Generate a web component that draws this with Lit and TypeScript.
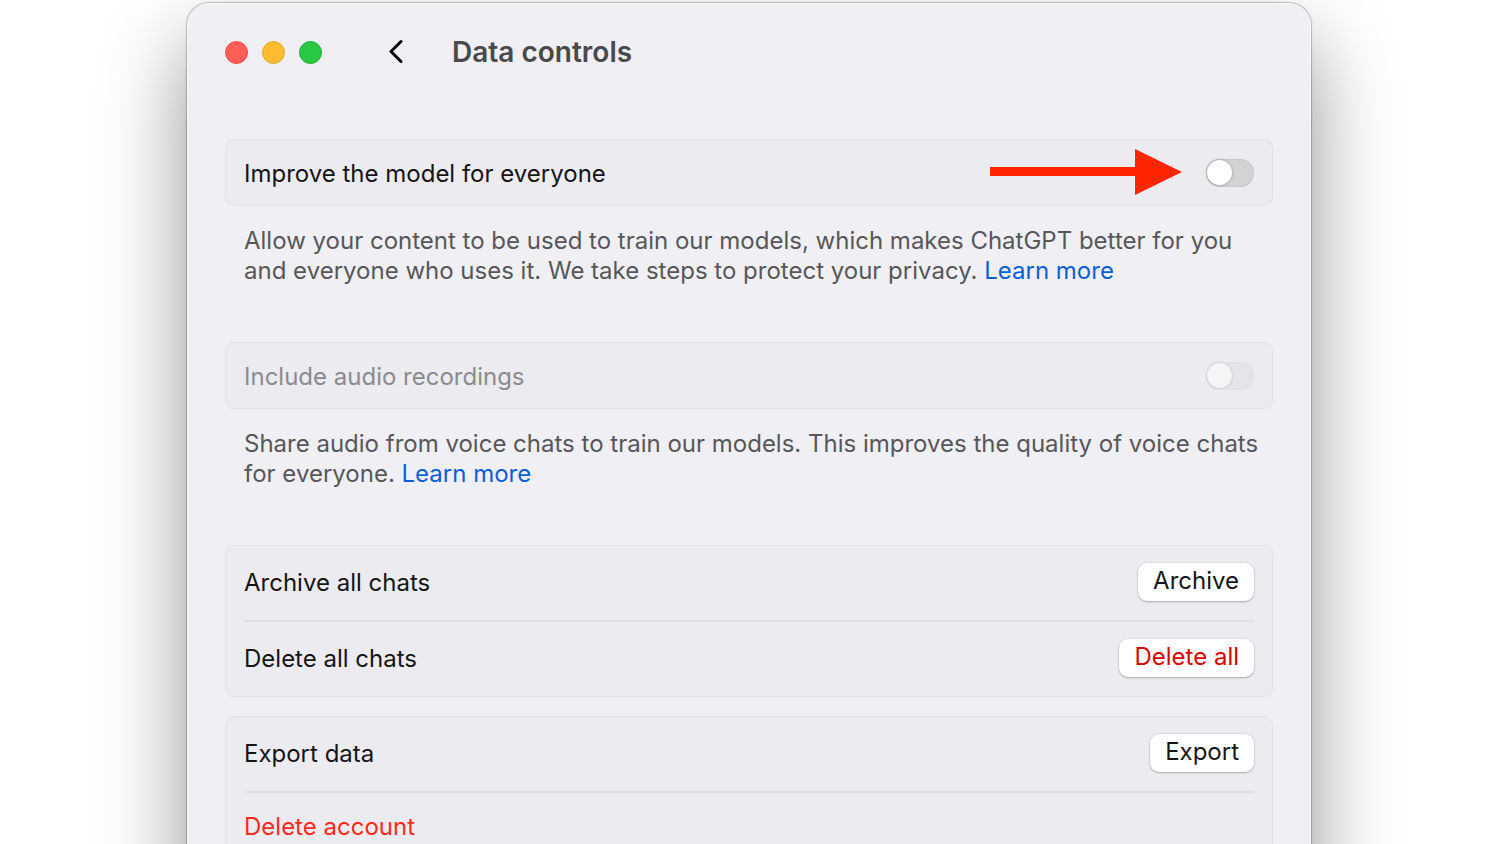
import { LitElement, html, css } from "lit";
import { customElement, property } from "lit/decorators.js";

@customElement("toggle-row")
class ToggleRow extends LitElement {
  @property() label = "";
  @property({ type: Boolean }) disabled = false;

  static styles = css`
    :host {
      display: block;
    }
    .row {
      display: flex;
      align-items: center;
      gap: 24px;
      height: 67px;
      box-sizing: border-box;
      padding: 0 18px;
      border: 1px solid #e2e2e5;
      border-radius: 9px;
      background: #ecebf0;
      color: #151517;
    }
    .label {
      flex: 1;
      padding-top: 2px;
    }
    .switch {
      appearance: none;
      flex: none;
      display: flex;
      align-items: center;
      width: 48px;
      height: 28px;
      box-sizing: border-box;
      margin: 0;
      padding: 1px;
      border-radius: 14px;
      background: #d3d3d6;
      box-shadow: inset 0 0 1px 1px #c8c8cb;
    }
    .switch::before {
      content: "";
      width: 25px;
      height: 25px;
      border-radius: 50%;
      background: #fff;
      box-shadow: 0 0 2px 1px rgba(0, 0, 0, 0.16);
    }
    .switch:checked {
      justify-content: flex-end;
      background: #0a7aff;
    }
    .off {
      color: #8b8b8e;
    }
    .off .switch {
      background: #e4e5e8;
      box-shadow: inset 0 0 1px 1px #e0e1e3;
    }
    .off .switch::before {
      background: #f5f5f7;
      box-shadow: 0 0 2px 1px rgba(0, 0, 0, 0.08);
    }
  `;

  render() {
    return html`
      <div class="row ${this.disabled ? "off" : ""}">
        <label class="label" for="toggle">${this.label}</label>
        <slot></slot>
        <input class="switch" id="toggle" type="checkbox" role="switch" ?disabled=${this.disabled} />
      </div>
    `;
  }
}

@customElement("app-root")
class AppRoot extends LitElement {
  static styles = css`
    :host {
      display: block;
      height: 100vh;
      overflow: hidden;
      background: #fff;
      font: 24px/30px Inter, "Liberation Sans", sans-serif;
    }
    .window {
      min-height: 120vh;
      box-sizing: border-box;
      margin: 3px 189px 0 187px;
      padding: 0 37px;
      border: 1px solid #fafafc;
      border-radius: 22px;
      background: #f0eff4;
      box-shadow: 0 0 1px 1px rgba(0, 0, 0, 0.24), 0 40px 84px rgba(0, 0, 0, 0.43);
    }
    .titlebar {
      display: flex;
      align-items: center;
      height: 96px;
      margin-bottom: 39px;
    }
    .lights {
      display: flex;
      gap: 14px;
    }
    .light {
      width: 23px;
      height: 23px;
      box-sizing: border-box;
      padding: 0;
      border: 1px solid;
      border-radius: 50%;
    }
    .close {
      background: #ff5f57;
      border-color: #f04a42;
    }
    .minimize {
      background: #febc2e;
      border-color: #e5a52c;
    }
    .zoom {
      background: #28c840;
      border-color: #1fb033;
    }
    .back {
      display: flex;
      margin-left: 60px;
      padding: 0;
      border: 0;
      background: none;
    }
    .title {
      margin: 0 0 0 42px;
      font-size: 28px;
      line-height: 34px;
      font-weight: 600;
      color: #49494b;
    }
    .hint {
      margin: 20px 8px 56px 19px;
      color: #575759;
    }
    .hint a {
      color: #0860d8;
      text-decoration: none;
    }
    .group {
      margin-bottom: 19px;
      padding: 0 18px;
      border: 1px solid #e2e2e5;
      border-radius: 9px;
      background: #ecebf0;
      color: #151517;
    }
    .item {
      display: flex;
      align-items: center;
      justify-content: space-between;
      height: 74px;
    }
    .item + .item {
      border-top: 2px solid #e0e0e4;
    }
    .item.last {
      height: 68px;
    }
    .push {
      height: 38px;
      margin-bottom: 2px;
      padding: 0 15px 2px;
      border: 0;
      border-radius: 9px;
      background: #fff;
      box-shadow: 0 1px 2px rgba(0, 0, 0, 0.24), 0 0 1px 1px rgba(0, 0, 0, 0.05);
      font: inherit;
      color: #151517;
    }
    .push.danger {
      color: #dd0000;
    }
    .account {
      padding: 0;
      border: 0;
      background: none;
      font: inherit;
      color: #ff2a1c;
    }
    .arrow {
      display: block;
    }
  `;

  render() {
    return html`
      <main class="window">
        <header class="titlebar">
          <div class="lights">
            <button class="light close" aria-label="Close"></button>
            <button class="light minimize" aria-label="Minimize"></button>
            <button class="light zoom" aria-label="Zoom"></button>
          </div>
          <button class="back" aria-label="Back">
            <svg width="28" height="28" viewBox="0 0 28 28" fill="none" stroke="#000" stroke-width="3" stroke-linecap="round" stroke-linejoin="round">
              <path d="M19 3.5 L9 13.5 L19 23.5" />
            </svg>
          </button>
          <h1 class="title">Data controls</h1>
        </header>

        <toggle-row label="Improve the model for everyone">
          <svg class="arrow" width="192" height="48" viewBox="0 0 192 48" fill="#ff2600">
            <path d="M0 18 H145 V0 L192 23 L145 46 V27 H0 Z" />
          </svg>
        </toggle-row>
        <p class="hint">
          Allow your content to be used to train our models, which makes ChatGPT better for you and everyone who uses
          it. We take steps to protect your privacy. <a href="#">Learn more</a>
        </p>

        <toggle-row label="Include audio recordings" disabled></toggle-row>
        <p class="hint">
          Share audio from voice chats to train our models. This improves the quality of voice chats for everyone.
          <a href="#">Learn more</a>
        </p>

        <section class="group">
          <div class="item">
            <span>Archive all chats</span>
            <button class="push">Archive</button>
          </div>
          <div class="item">
            <span>Delete all chats</span>
            <button class="push danger">Delete all</button>
          </div>
        </section>

        <section class="group">
          <div class="item">
            <span>Export data</span>
            <button class="push">Export</button>
          </div>
          <div class="item last">
            <button class="account">Delete account</button>
          </div>
        </section>
      </main>
    `;
  }
}
